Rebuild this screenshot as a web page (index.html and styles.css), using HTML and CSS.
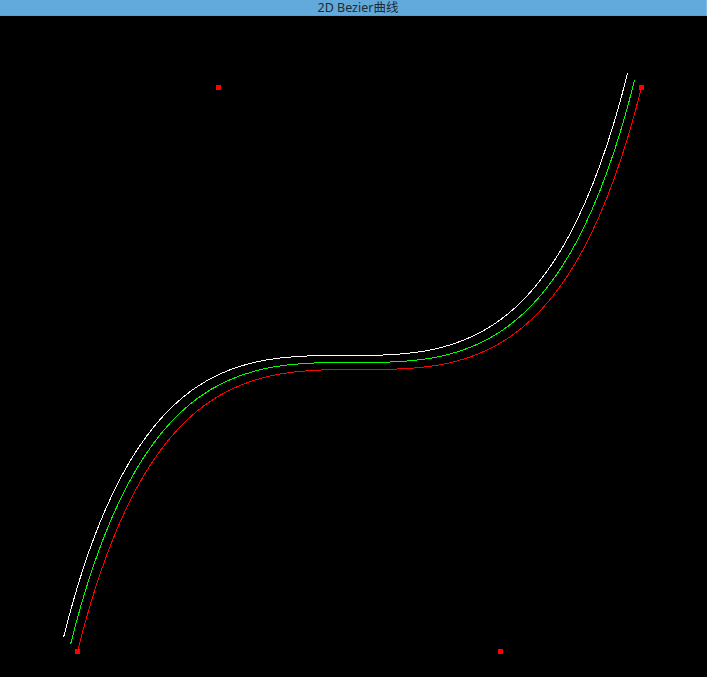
FILE: index.html
```
<!DOCTYPE html>
<html>
<head>
<meta charset="utf-8">
<link rel="stylesheet" href="styles.css">
</head>
<body>
<div class="titlebar"><span class="title">2D Bezier曲线</span></div>
<div class="canvas">
<svg class="plot" width="707" height="661" viewBox="0 16 707 661" shape-rendering="crispEdges">
<path d="M63.5 637.5 C204.5 73.5, 486.5 637.5, 627.5 73.5" stroke="#ffffff" fill="none" stroke-width="1"/>
<path d="M70.5 644.5 C211.5 80.5, 493.5 644.5, 634.5 80.5" stroke="#00ff00" fill="none" stroke-width="1"/>
<path d="M77.5 651.5 C218.5 87.5, 500.5 651.5, 641.5 87.5" stroke="#ff0000" fill="none" stroke-width="1"/>
<rect x="216" y="85" width="5" height="5" fill="#ff0000"/>
<rect x="639" y="85" width="5" height="5" fill="#ff0000"/>
<rect x="75" y="649" width="5" height="5" fill="#ff0000"/>
<rect x="498" y="649" width="5" height="5" fill="#ff0000"/>
</svg>
</div>
</body>
</html>
```
FILE: styles.css
```
html, body {
  margin: 0;
  padding: 0;
  background: #000000;
  overflow: hidden;
}
.titlebar {
  box-sizing: border-box;
  height: 16px;
  background: #62a9dc;
  border-bottom: 1px solid #5a9fd2;
  border-right: 1px solid #7fbbe6;
  display: flex;
  justify-content: center;
  align-items: center;
  padding-left: 10px;
}
.title {
  font-family: "Noto Sans", "Noto Sans CJK SC", sans-serif;
  font-size: 12.5px;
  line-height: 14px;
  color: #222a30;
}
.canvas {
  height: 661px;
  background: #000000;
}
.plot {
  display: block;
}
```
